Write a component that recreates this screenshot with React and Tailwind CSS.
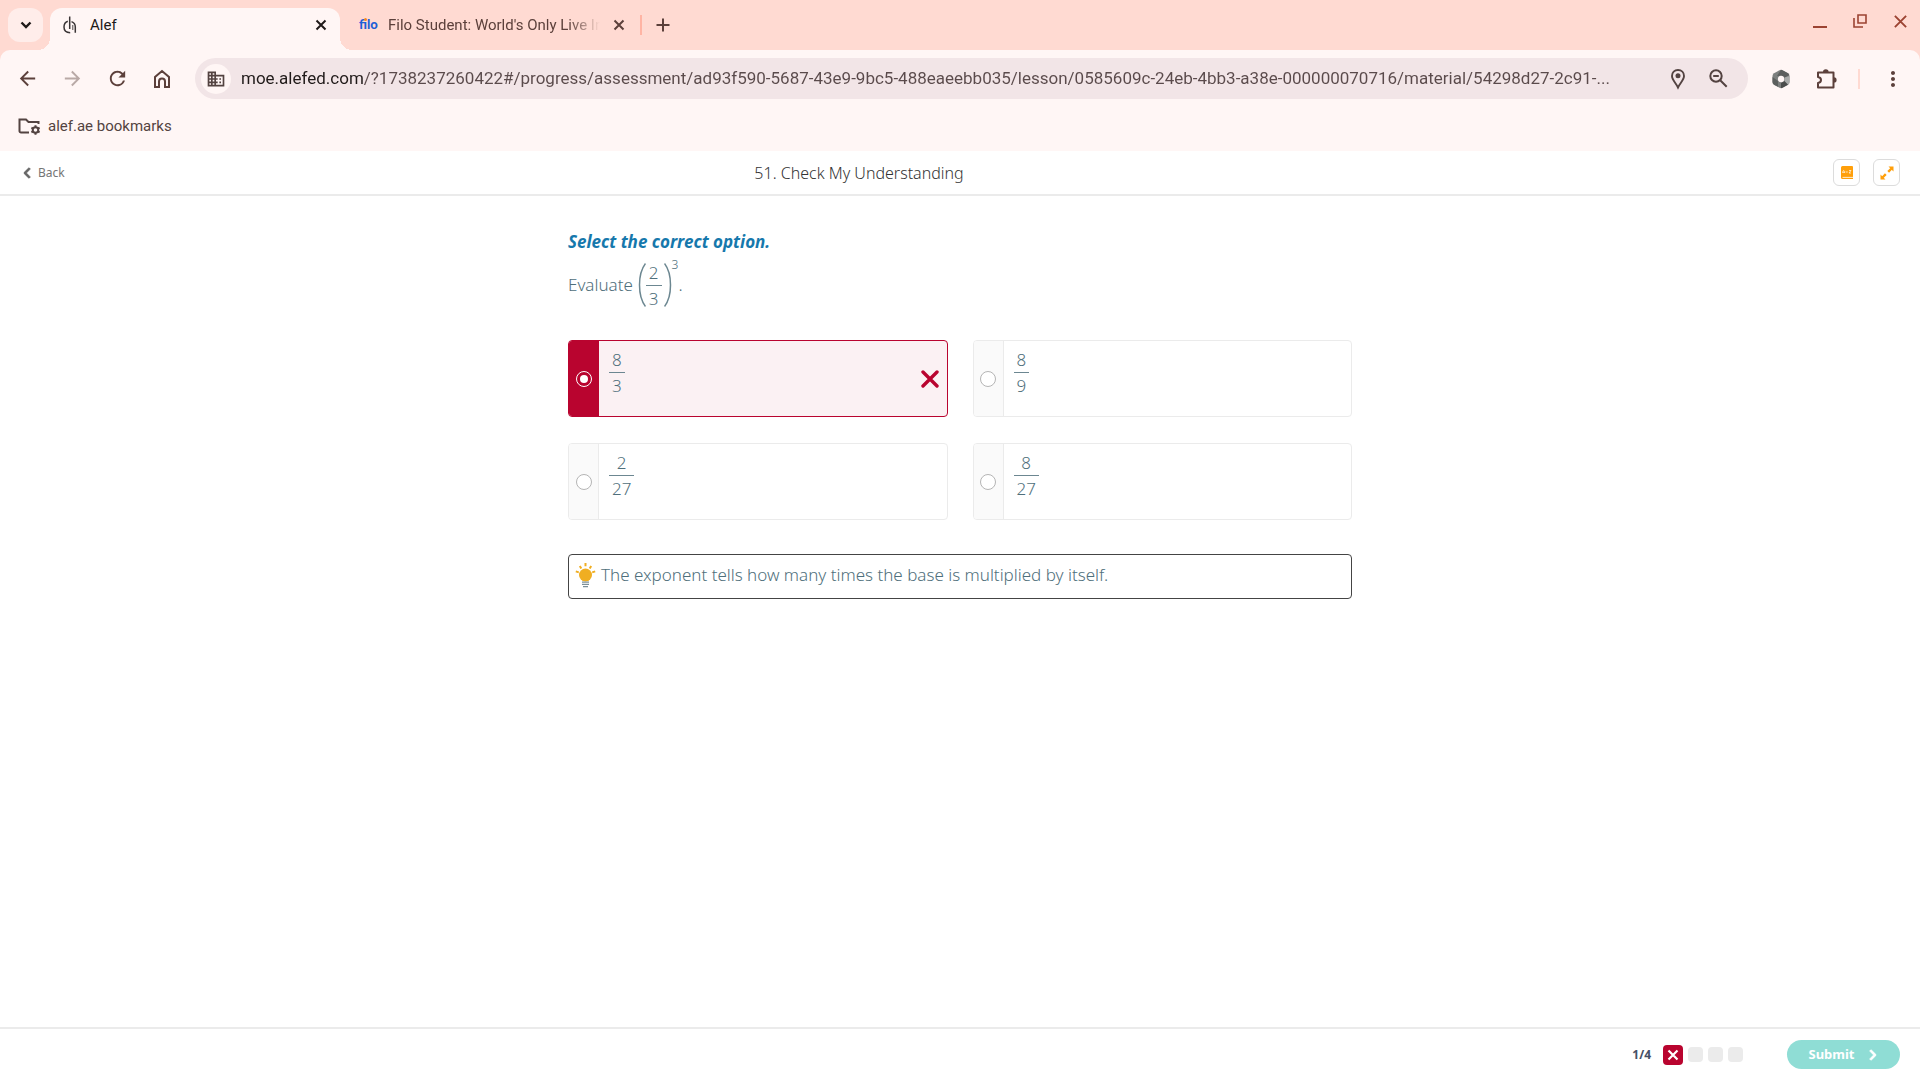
import React, { useState } from 'react';
import { MdArrowBack, MdArrowForward, MdRefresh, MdDomain, MdMoreVert } from 'react-icons/md';
import { FaChevronLeft, FaChevronRight } from 'react-icons/fa';

const options = [
  { id: 'a', top: '8', bottom: '3', wrong: true },
  { id: 'b', top: '8', bottom: '9' },
  { id: 'c', top: '2', bottom: '27' },
  { id: 'd', top: '8', bottom: '27' },
];

const pageUrl =
  'moe.alefed.com/?1738237260422#/progress/assessment/ad93f590-5687-43e9-9bc5-488eaeebb035/lesson/0585609c-24eb-4bb3-a38e-000000070716/material/54298d27-2c91-...';

const CrossIcon = ({ className, width = 2 }) => (
  <svg viewBox="0 0 12 12" className={className} fill="none" stroke="currentColor" strokeWidth={width} aria-hidden="true">
    <path d="M1.500 1.500l9 9M10.500 1.500l-9 9" />
  </svg>
);

const AlefLogo = () => (
  <svg viewBox="0 0 14 18" className="h-[18px] w-[14px]" fill="none" stroke="#3a3536" strokeWidth="1.500" aria-hidden="true">
    <path d="M6.700 0.500V13" />
    <path d="M4.800 5.200C2.400 6 1 8.300 1 11c0 3.200 2.200 5.600 6.200 5.700" />
    <path d="M8.500 5.600C11 6.500 12.300 8.300 12.300 11v5.800" />
    <path d="M9.800 9v5" strokeWidth="0.900" />
  </svg>
);

const HomeIcon = () => (
  <svg viewBox="0 0 18 20" className="h-5 w-[18px]" fill="none" stroke="currentColor" strokeWidth="2" aria-hidden="true">
    <path d="M2 18V8l7-6 7 6v10h-4v-5.500a3 3 0 0 0-6 0V18z" />
  </svg>
);

const PinIcon = () => (
  <svg viewBox="0 0 16 22" className="h-[22px] w-4" aria-hidden="true">
    <path d="M8 2c3.500 0 6 2.500 6 6 0 4-4 7-6 11.500C6 15 2 12 2 8c0-3.500 2.500-6 6-6z" fill="none" stroke="currentColor" strokeWidth="1.900" />
    <circle cx="8" cy="7.800" r="2.500" fill="currentColor" />
  </svg>
);

const ZoomOutIcon = () => (
  <svg viewBox="0 0 19 19" className="h-[19px] w-[19px]" fill="none" stroke="currentColor" strokeWidth="2" aria-hidden="true">
    <circle cx="7" cy="7" r="5.700" />
    <path d="M4.200 7h5.600M11.200 11.200l6.500 6.500" />
  </svg>
);

const HexIcon = () => (
  <svg viewBox="0 0 18 20" className="h-5 w-[18px]" aria-hidden="true">
    <path d="M7.500 1.200Q9 .4 10.500 1.200L16 4.300Q17.500 5.200 17.500 7v6q0 1.800-1.500 2.700l-5.500 3.100Q9 19.600 7.500 18.800L2 15.700Q.5 14.800.5 13V7Q.5 5.200 2 4.300z" fill="#7c7f7e" />
    <path d="M9 .8l1.500.4L16 4.300l1.300 1.700L12 9 9 6.500 5 7z" fill="#5c5f5e" />
    <path d="M17.500 7v6q0 1.800-1.500 2.700L12.500 13V8.500z" fill="#a9abaa" />
    <path d="M16 15.700l-5.500 3.100L9 19.200V14l3.500-2z" fill="#4b4d4c" />
    <path d="M.5 8v5q0 1.800 1.500 2.700l4 2.100L6 12z" fill="#5c5f5e" />
    <circle cx="9" cy="10" r="3.200" fill="#fff6f5" />
  </svg>
);

const PuzzleIcon = () => (
  <svg viewBox="0 0 21 21" className="h-[21px] w-[21px]" aria-hidden="true">
    <path d="M2 4.500h15.500v15H2v-4.500c2.200-.3 3-1.500 3-3s-.8-2.700-3-3z" fill="none" stroke="currentColor" strokeWidth="2" strokeLinejoin="round" />
    <path d="M7 4a2.800 2.800 0 0 1 5.600 0zM18 9.300a2.600 2.600 0 0 1 0 5.200z" fill="currentColor" />
  </svg>
);

const FolderGearIcon = () => (
  <svg viewBox="0 0 23 19" className="h-[19px] w-[23px]" fill="none" stroke="currentColor" strokeWidth="2" aria-hidden="true">
    <path d="M11 15.500H3a1.500 1.500 0 0 1-1.500-1.500V2.500H8l2.500 2.500H20.500v2" />
    <circle cx="17.500" cy="13" r="2.800" />
    <path d="M17.500 8.300v1.900M17.500 15.800v1.900M13.400 10.600l1.700 1M19.900 14.400l1.700 1M13.400 15.400l1.700-1M19.900 11.600l1.700-1" />
  </svg>
);

const BookIcon = () => (
  <svg viewBox="0 0 12 14" className="h-[14px] w-3" aria-hidden="true">
    <path d="M1.500 0H11a1 1 0 0 1 1 1v12H1.500A1.500 1.500 0 0 1 0 11.500v-10A1.500 1.500 0 0 1 1.500 0z" fill="#ff9f0a" />
    <path d="M1.500 11.400H12" stroke="#fff" strokeWidth="0.800" />
    <path d="M1.800 7V5.400l1-.9.9.9V7M1.800 6.200h1.900M5 6h1.800M8 4.500h2L8 7h2" fill="none" stroke="#fff" strokeWidth="0.700" />
  </svg>
);

const ExpandIcon = () => (
  <svg viewBox="0 0 14 14" className="h-[14px] w-[14px]" aria-hidden="true">
    <path d="M8.500 0.500h5v5zM5.500 13.500h-5v-5z" fill="#ff9f0a" />
    <path d="M11.500 2.500L8.200 5.800M5.800 8.200l-3.300 3.300" stroke="#ff9f0a" strokeWidth="2.400" />
  </svg>
);

const BulbIcon = () => (
  <svg viewBox="0 0 22 26" className="h-[26px] w-[22px] shrink-0" aria-hidden="true">
    <circle cx="10.500" cy="13" r="6.500" fill="#f0ae22" />
    <path d="M7.500 15h6v4h-6z" fill="#f0ae22" />
    <path d="M10.500 1v3.300M4.800 4l1.500 2.500M16.200 4l-1.500 2.500M0.800 9.400l3 1M20.200 9.400l-3 1" stroke="#f0ae22" strokeWidth="2" />
    <path d="M7 20.200h7M7 22.400h7M8 24.700h5" stroke="#7b8f98" strokeWidth="1.300" />
  </svg>
);

const Fraction = ({ top, bottom }) => (
  <span className="inline-flex flex-col items-center text-center text-[17px] leading-[25px]">
    <span>{top}</span>
    <span className="h-px w-full bg-[#6c8791]" />
    <span className="px-[3px]">{bottom}</span>
  </span>
);

const TabStrip = () => (
  <div className="flex h-[50px] items-end bg-[#ffdad2] pl-2 text-[#5c403b]">
    <button aria-label="Search tabs" className="mb-2 flex h-[34px] w-[35px] items-center justify-center rounded-xl bg-[#ffedea] text-[#201a19]">
      <svg viewBox="0 0 12 8" className="h-2 w-3" fill="none" stroke="currentColor" strokeWidth="2.400" aria-hidden="true">
        <path d="M1.500 1.500L6 6l4.500-4.500" />
      </svg>
    </button>

    <div className="relative ml-[7px] flex h-[42px] w-[290px] items-center rounded-t-xl bg-[#fff6f5] pr-[13px] pb-2 pl-[13px] text-[#201a19]">
      <span className="absolute bottom-0 -left-3 h-3 w-3 bg-[radial-gradient(circle_at_top_left,transparent_12px,#fff6f5_12px)]" />
      <span className="absolute -right-3 bottom-0 h-3 w-3 bg-[radial-gradient(circle_at_top_right,transparent_12px,#fff6f5_12px)]" />
      <AlefLogo />
      <span className="ml-[13px] flex-1 text-[15px]">Alef</span>
      <button aria-label="Close Alef">
        <CrossIcon className="h-3 w-3" />
      </button>
    </div>

    <div className="ml-[19px] flex h-[42px] items-center pb-2">
      <span className="relative w-[19px] font-[Lato] text-[13px] font-black text-[#1f5fd6]">
        filo
        <span className="absolute top-[3px] left-[5px] h-[3px] w-[3px] rounded-full bg-[#f58a1f]" />
      </span>
      <span className="ml-[10px] w-[213px] [mask-image:linear-gradient(to_right,#000_180px,transparent_212px)] text-[15px] whitespace-nowrap">
        Filo Student: World's Only Live In
      </span>
      <button aria-label="Close Filo Student" className="ml-3">
        <CrossIcon className="h-3 w-3" />
      </button>
      <span className="ml-[15px] h-5 w-[2px] bg-[#ffb4a4]" />
      <button aria-label="New tab" className="ml-[14px]">
        <svg viewBox="0 0 14 14" className="h-[14px] w-[14px]" stroke="currentColor" strokeWidth="2" aria-hidden="true">
          <path d="M7 0.500v13M0.500 7h13" />
        </svg>
      </button>
    </div>

    <div className="ml-auto flex h-[42px] items-center gap-[26px] pr-3 pb-4 text-[#9c4332]">
      <button aria-label="Minimize">
        <svg viewBox="0 0 14 14" className="h-[14px] w-[14px]" stroke="currentColor" strokeWidth="2" aria-hidden="true">
          <path d="M0 13h14" />
        </svg>
      </button>
      <button aria-label="Restore">
        <svg viewBox="0 0 14 14" className="h-[14px] w-[14px]" fill="none" stroke="currentColor" strokeWidth="1.600" aria-hidden="true">
          <path d="M5 1h8v8H5zM1 4v9h9" />
        </svg>
      </button>
      <button aria-label="Close window">
        <CrossIcon className="h-[15px] w-[15px]" width={1.5} />
      </button>
    </div>
  </div>
);

const Toolbar = () => (
  <div className="bg-[#ffdad2]">
    <div className="rounded-t-[10px] bg-[#fff6f5] text-[#5c403b]">
      <div className="flex items-center pt-2">
        <nav className="flex w-[195px] items-center gap-[22px] pl-4">
          <button aria-label="Back"><MdArrowBack size={23} /></button>
          <button aria-label="Forward" className="text-[#b9a9a6]"><MdArrowForward size={23} /></button>
          <button aria-label="Reload"><MdRefresh size={23} /></button>
          <button aria-label="Home" className="ml-[2px]"><HomeIcon /></button>
        </nav>

        <div className="flex h-[41px] min-w-0 flex-1 items-center rounded-full bg-[#f2e5e7] pr-5 pl-[6px] text-[#534341]">
          <button aria-label="Site information" className="flex h-[30px] w-[30px] items-center justify-center rounded-full bg-[#fff6f5]">
            <MdDomain size={20} />
          </button>
          <input
            aria-label="Address"
            readOnly
            value={pageUrl}
            className="ml-[10px] min-w-0 flex-1 bg-[linear-gradient(to_right,#201a19_122px,#5a4a4b_122px)] bg-clip-text text-[17px] text-transparent outline-none"
          />
          <button aria-label="Location" className="mr-[23px]"><PinIcon /></button>
          <button aria-label="Zoom"><ZoomOutIcon /></button>
        </div>

        <div className="flex w-[172px] items-center pl-6">
          <button aria-label="Extension"><HexIcon /></button>
          <button aria-label="Extensions" className="ml-[26px]"><PuzzleIcon /></button>
          <span className="ml-[21px] h-5 w-[2px] bg-[#ffdad2]" />
          <button aria-label="More" className="ml-[21px]"><MdMoreVert size={24} /></button>
        </div>
      </div>

      <div className="flex h-[52px] items-center gap-[7px] pt-[2px] pl-[18px] text-[15px] text-[#534341]">
        <FolderGearIcon />
        <a href="#bookmarks">alef.ae bookmarks</a>
      </div>
    </div>
  </div>
);

const LessonHeader = () => (
  <header className="flex h-[45px] items-center border-b-2 border-[#ebebeb]">
    <a href="#back" className="flex w-[120px] items-center gap-[5px] pl-[21px] text-xs text-[#757575]">
      <FaChevronLeft size={12} stroke="currentColor" strokeWidth={40} className="text-[#666]" />
      Back
    </a>
    <h1 className="flex-1 text-center text-[16px] font-light text-[#333]">51. Check My Understanding</h1>
    <div className="flex w-[322px] justify-end gap-[13px] pr-5">
      <button aria-label="Glossary" className="flex h-[27px] w-[27px] items-center justify-center rounded-md border border-[#dcdcdc]">
        <BookIcon />
      </button>
      <button aria-label="Full screen" className="flex h-[27px] w-[27px] items-center justify-center rounded-md border border-[#dcdcdc]">
        <ExpandIcon />
      </button>
    </div>
  </header>
);

const Option = ({ option, checked, onSelect }) => {
  const wrong = checked && option.wrong;
  return (
    <label
      className={`flex h-[77px] overflow-hidden rounded-[4px] border ${wrong ? 'border-[#b9042f] bg-[#fbf1f3]' : 'border-[#ebebeb] bg-white'}`}
    >
      <span
        className={`flex w-[30px] items-center justify-center border-r ${wrong ? 'border-[#b9042f] bg-[#b9042f]' : 'border-[#ebebeb] bg-[#fafafa]'}`}
      >
        <input
          type="radio"
          name="answer"
          aria-label={`${option.top} over ${option.bottom}`}
          checked={checked}
          onChange={onSelect}
          className="flex h-4 w-4 appearance-none items-center justify-center rounded-full border border-[#b5b5b5] bg-white checked:border-white checked:bg-[#b9042f] checked:before:h-2 checked:before:w-2 checked:before:rounded-full checked:before:bg-white"
        />
      </span>
      <span className="flex-1 pt-[6px] pl-[10px]">
        <Fraction top={option.top} bottom={option.bottom} />
      </span>
      {wrong && (
        <svg viewBox="0 0 18 18" className="mr-2 h-[18px] w-[18px] self-center" stroke="#b9042f" strokeWidth="3.400" strokeLinecap="round" aria-hidden="true">
          <path d="M2 2l14 14M16 2L2 16" />
        </svg>
      )}
    </label>
  );
};

const Question = () => {
  const [selected, setSelected] = useState('a');

  return (
    <main className="mx-auto w-full max-w-[784px] flex-1 pt-8 text-[17px] font-light text-[#4f6f7b]">
      <h2 className="leading-7 font-bold text-[#1678ac] italic">Select the correct option.</h2>
      <p className="flex h-[58px] items-center">
        Evaluate
        <svg viewBox="0 0 8 44" className="ml-[5px] h-11 w-2" fill="none" stroke="#6c8791" strokeWidth="1.500" aria-hidden="true">
          <path d="M7.500 0.500C-0.500 11-0.500 33 7.500 43.500" />
        </svg>
        <Fraction top="2" bottom="3" />
        <svg viewBox="0 0 8 44" className="ml-[2px] h-11 w-2" fill="none" stroke="#6c8791" strokeWidth="1.500" aria-hidden="true">
          <path d="M0.500 0.500c8 10.500 8 32.500 0 43" />
        </svg>
        <sup className="mb-7 text-xs">3</sup>
        <span>.</span>
      </p>

      <div className="mt-[26px] grid grid-cols-2 gap-x-[25px] gap-y-[26px]">
        {options.map((option) => (
          <Option key={option.id} option={option} checked={selected === option.id} onSelect={() => setSelected(option.id)} />
        ))}
      </div>

      <div className="mt-[34px] flex h-[45px] items-center gap-1 rounded-[4px] border border-[#444] pb-1 pl-[6px]">
        <BulbIcon />
        <p>The exponent tells how many times the base is multiplied by itself.</p>
      </div>
    </main>
  );
};

const Footer = () => (
  <footer className="flex h-[53px] items-center justify-end border-t-2 border-[#ebebeb] pr-5">
    <span className="text-xs font-bold text-[#455065]">1/4</span>
    <span className="ml-3 flex h-5 w-5 items-center justify-center rounded-[4px] bg-[#b9042f] text-white">
      <CrossIcon className="h-3 w-3" width={2.2} />
    </span>
    {[2, 3, 4].map((step) => (
      <span key={step} className="ml-[5px] h-[15px] w-[15px] rounded-[4px] bg-[#ebebeb]" />
    ))}
    <button className="ml-11 flex h-[29px] w-[113px] items-center justify-center gap-3 rounded-full bg-[#8fddd5] text-[13px] font-bold text-white">
      Submit
      <FaChevronRight size={12} stroke="currentColor" strokeWidth={40} />
    </button>
  </footer>
);

const App = () => (
  <div className="flex min-h-screen flex-col bg-white font-[Roboto,sans-serif]">
    <TabStrip />
    <Toolbar />
    <div className="flex flex-1 flex-col font-['Noto_Sans',sans-serif]">
      <LessonHeader />
      <Question />
      <Footer />
    </div>
  </div>
);

export default App;
